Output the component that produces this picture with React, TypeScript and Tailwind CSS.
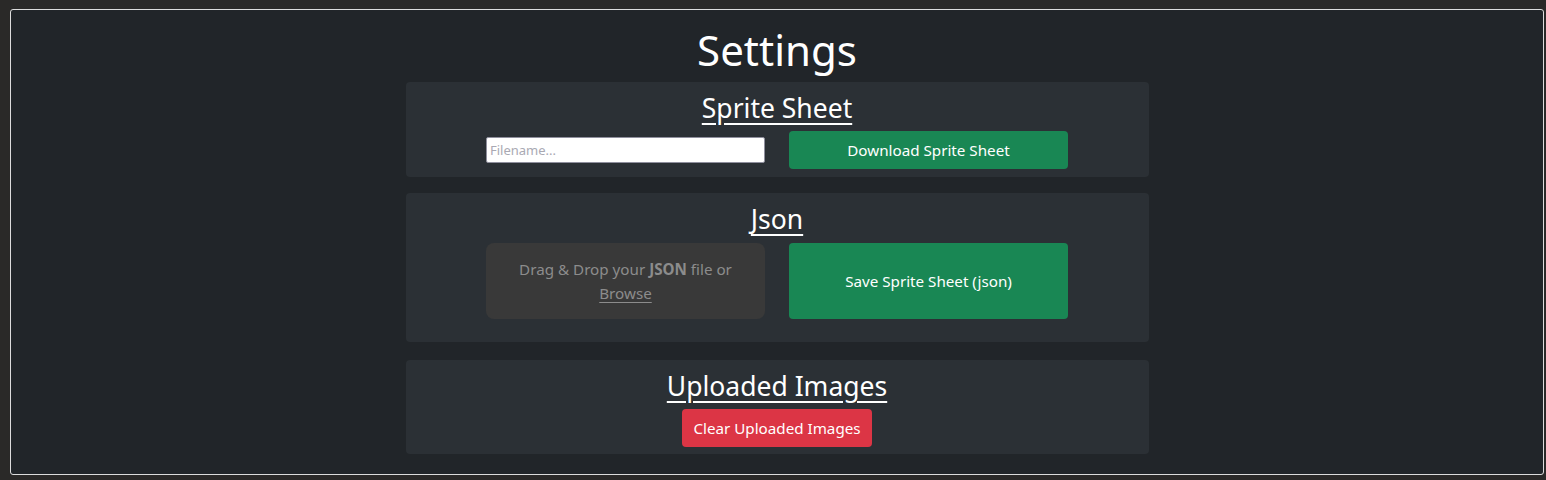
export default function App() {
  return (
    <div
      className="min-h-[480px] bg-[#2a2928] pt-[9px] pb-[6px] pl-[10px] pr-[2px]"
      style={{ fontFamily: '"Noto Sans", "Open Sans", sans-serif' }}
    >
      <div className="flex flex-col items-center rounded-[3px] border border-[#dcdcdc] bg-[#212529] pt-[16px] pb-[20px] text-white">
        <h1 className="mb-[8px] text-[42px] leading-[48px]">Settings</h1>

        <section className="flex w-[743px] flex-col items-center rounded-[4px] bg-[#2b3035] pt-[9px] pb-[8px]">
          <h3 className="mb-[6px] text-[26.5px] leading-[34px] underline underline-offset-[5px]">Sprite Sheet</h3>
          <div className="flex items-center gap-[24px]">
            <input
              type="text"
              placeholder="Filename..."
              className="h-[26px] w-[279px] rounded-[2px] border border-[#8f8f9d] bg-white px-[3px] text-[13px] text-black placeholder:text-[#a9a9b3]"
            />
            <button className="h-[38px] w-[279px] rounded-[4px] bg-[#198754] text-[15.2px] text-white">
              Download Sprite Sheet
            </button>
          </div>
        </section>

        <section className="mt-[16px] flex w-[743px] flex-col items-center rounded-[4px] bg-[#2b3035] pt-[9px] pb-[23px]">
          <h3 className="mb-[7px] text-[26.5px] leading-[34px] underline underline-offset-[5px]">Json</h3>
          <div className="flex gap-[24px]">
            <div className="flex h-[76px] w-[279px] flex-col items-center justify-center rounded-[8px] bg-[#393939] text-center text-[15.2px] leading-[24px] text-[#8c8c8c]">
              <span>
                Drag &amp; Drop your <b className="font-bold">JSON</b> file or
              </span>
              <span className="underline underline-offset-[3px]">Browse</span>
            </div>
            <button className="h-[76px] w-[279px] rounded-[4px] bg-[#198754] text-[15.2px] text-white">
              Save Sprite Sheet (json)
            </button>
          </div>
        </section>

        <section className="mt-[18px] flex w-[743px] flex-col items-center rounded-[4px] bg-[#2b3035] pt-[9px] pb-[7px]">
          <h3 className="mb-[6px] text-[26.5px] leading-[34px] underline underline-offset-[5px]">Uploaded Images</h3>
          <button className="h-[38px] w-[190px] rounded-[4px] bg-[#dc3545] text-[15.2px] text-white">
            Clear Uploaded Images
          </button>
        </section>
      </div>
    </div>
  );
}
